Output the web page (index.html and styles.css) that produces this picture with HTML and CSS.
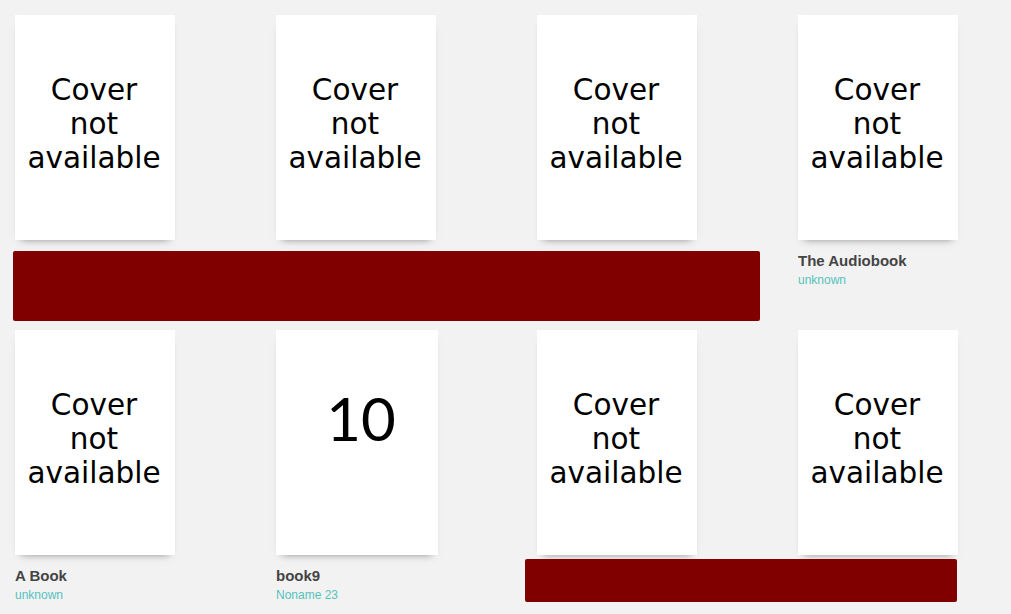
FILE: index.html
```html
<!DOCTYPE html>
<html>
<head>
<meta charset="utf-8">
<link rel="stylesheet" href="styles.css">
</head>
<body>
<div class="shelf">
  <div class="book">
    <div class="cover"><div class="placeholder">Cover<br>not<br>available</div></div>
    <div class="meta"></div>
  </div>
  <div class="book">
    <div class="cover"><div class="placeholder">Cover<br>not<br>available</div></div>
    <div class="meta"></div>
  </div>
  <div class="book">
    <div class="cover"><div class="placeholder">Cover<br>not<br>available</div></div>
    <div class="meta"></div>
  </div>
  <div class="book">
    <div class="cover"><div class="placeholder">Cover<br>not<br>available</div></div>
    <div class="meta">
      <div class="title">The Audiobook</div>
      <div class="author">unknown</div>
    </div>
  </div>

  <div class="book">
    <div class="cover"><div class="placeholder">Cover<br>not<br>available</div></div>
    <div class="meta">
      <div class="title">A Book</div>
      <div class="author">unknown</div>
    </div>
  </div>
  <div class="book">
    <div class="cover wide"><div class="number">10</div></div>
    <div class="meta">
      <div class="title">book9</div>
      <div class="author">Noname 23</div>
    </div>
  </div>
  <div class="book">
    <div class="cover"><div class="placeholder">Cover<br>not<br>available</div></div>
    <div class="meta"></div>
  </div>
  <div class="book">
    <div class="cover"><div class="placeholder">Cover<br>not<br>available</div></div>
    <div class="meta"></div>
  </div>
</div>
<div class="mask mask-one"></div>
<div class="mask mask-two"></div>
</body>
</html>
```
FILE: styles.css
```css
html, body {
  margin: 0;
  padding: 0;
  background: #f2f2f2;
  overflow: hidden;
}
body {
  width: 1011px;
  height: 614px;
  position: relative;
  font-family: "Liberation Sans", Arial, sans-serif;
}
.shelf {
  display: grid;
  grid-template-columns: repeat(4, 261px);
  grid-auto-rows: 315px;
  padding: 15px 0 0 15px;
  height: 599px;
  overflow: hidden;
}
.book {
  display: flex;
  flex-direction: column;
}
.cover {
  width: 160px;
  height: 225px;
  background: #fff;
  box-shadow: 0 5px 8px -6px #777;
  display: flex;
  align-items: center;
  justify-content: center;
}
.cover.wide {
  width: 162px;
  align-items: flex-start;
}
.placeholder {
  font-family: "DejaVu Sans", sans-serif;
  font-size: 29.5px;
  line-height: 34px;
  color: #000;
  text-align: center;
  padding-bottom: 7px;
  margin-left: -2px;
}
.number {
  font-family: "Lato", "Open Sans", sans-serif;
  font-size: 60px;
  line-height: 1;
  color: #000;
  margin-top: 58px;
  padding-left: 8px;
}
.meta {
  margin-top: 11px;
}
.title {
  font-weight: bold;
  font-size: 15px;
  line-height: 20px;
  color: #444;
}
.author {
  font-size: 12px;
  line-height: 19px;
  color: #52c2bd;
}
.mask {
  position: absolute;
  background: #800000;
  border-radius: 2px;
}
.mask-one {
  left: 13px;
  top: 251px;
  width: 747px;
  height: 70px;
}
.mask-two {
  left: 525px;
  top: 559px;
  width: 432px;
  height: 43px;
}
```
